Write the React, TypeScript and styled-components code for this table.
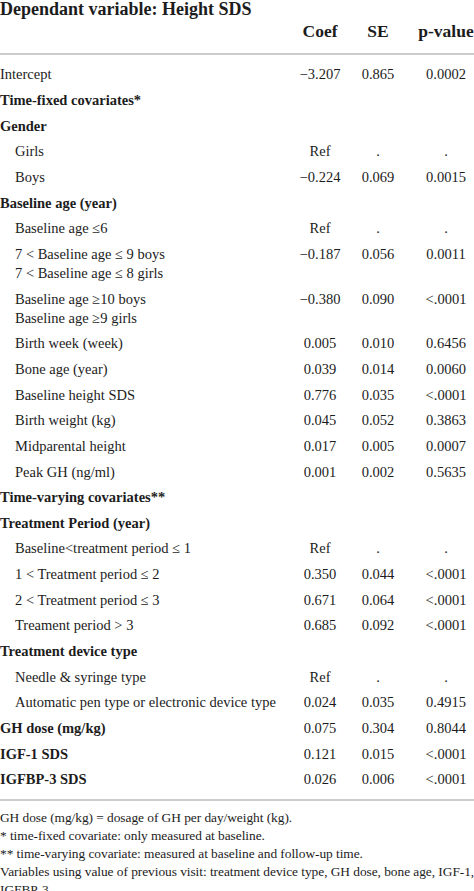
import React from 'react';
import styled, { createGlobalStyle } from 'styled-components';

const GlobalStyle = createGlobalStyle`
	html,
	body {
		margin: 0;
		padding: 0;
		background: #ffffff;
		overflow: hidden;
	}

	body {
		font-family: 'Liberation Serif', 'Times New Roman', serif;
		color: #1c1c1c;
	}
`;

const Page = styled.div`
	width: 474px;
	overflow: hidden;
`;

const Table = styled.div`
	width: 486px;
`;

const Title = styled.h2`
	margin: 0;
	font-size: 18px;
	line-height: 18px;
	font-weight: 700;
	white-space: nowrap;
`;

const Grid = styled.div`
	display: grid;
	grid-template-columns: 1fr 60px 56px 80px;
	align-items: start;
`;

const HeadRow = styled(Grid)`
	padding: 3px 0 12px;
	border-bottom: 2px solid #cccccc;

	span {
		font-size: 17.5px;
		line-height: 20px;
		font-weight: 700;
		text-align: center;
	}
`;

const Body = styled.div`
	padding: 7px 0 6px;
	border-bottom: 2px solid #cccccc;
`;

const Row = styled(Grid)`
	padding: 3.33px 0;
	font-size: 14.5px;
	line-height: 19px;
`;

const Label = styled.div<{ $bold?: boolean; $indent?: boolean }>`
	font-weight: ${(p) => (p.$bold ? 700 : 400)};
	padding-left: ${(p) => (p.$indent ? '15px' : '0')};
	white-space: nowrap;
`;

const Cell = styled.div`
	text-align: center;
	white-space: nowrap;
`;

const Notes = styled.div`
	width: 474px;
	padding-top: 8.5px;
	font-size: 13.4px;
	line-height: 18px;
	letter-spacing: -0.05px;

	p {
		margin: 0;
		white-space: nowrap;
	}
`;

type RowData = {
	label: string[];
	kind: 'section' | 'item' | 'boldItem' | 'plain';
	values?: [string, string, string];
};

const rows: RowData[] = [
	{ label: ['Intercept'], kind: 'plain', values: ['\u22123.207', '0.865', '0.0002'] },
	{ label: ['Time-fixed covariates*'], kind: 'section' },
	{ label: ['Gender'], kind: 'section' },
	{ label: ['Girls'], kind: 'item', values: ['Ref', '.', '.'] },
	{ label: ['Boys'], kind: 'item', values: ['\u22120.224', '0.069', '0.0015'] },
	{ label: ['Baseline age (year)'], kind: 'section' },
	{ label: ['Baseline age \u22646'], kind: 'item', values: ['Ref', '.', '.'] },
	{
		label: ['7 < Baseline age \u2264 9 boys', '7 < Baseline age \u2264 8 girls'],
		kind: 'item',
		values: ['\u22120.187', '0.056', '0.0011'],
	},
	{
		label: ['Baseline age \u226510 boys', 'Baseline age \u22659 girls'],
		kind: 'item',
		values: ['\u22120.380', '0.090', '<.0001'],
	},
	{ label: ['Birth week (week)'], kind: 'item', values: ['0.005', '0.010', '0.6456'] },
	{ label: ['Bone age (year)'], kind: 'item', values: ['0.039', '0.014', '0.0060'] },
	{ label: ['Baseline height SDS'], kind: 'item', values: ['0.776', '0.035', '<.0001'] },
	{ label: ['Birth weight (kg)'], kind: 'item', values: ['0.045', '0.052', '0.3863'] },
	{ label: ['Midparental height'], kind: 'item', values: ['0.017', '0.005', '0.0007'] },
	{ label: ['Peak GH (ng/ml)'], kind: 'item', values: ['0.001', '0.002', '0.5635'] },
	{ label: ['Time-varying covariates**'], kind: 'section' },
	{ label: ['Treatment Period (year)'], kind: 'section' },
	{ label: ['Baseline<treatment period \u2264 1'], kind: 'item', values: ['Ref', '.', '.'] },
	{ label: ['1 < Treatment period \u2264 2'], kind: 'item', values: ['0.350', '0.044', '<.0001'] },
	{ label: ['2 < Treatment period \u2264 3'], kind: 'item', values: ['0.671', '0.064', '<.0001'] },
	{ label: ['Treament period > 3'], kind: 'item', values: ['0.685', '0.092', '<.0001'] },
	{ label: ['Treatment device type'], kind: 'section' },
	{ label: ['Needle & syringe type'], kind: 'item', values: ['Ref', '.', '.'] },
	{
		label: ['Automatic pen type or electronic device type'],
		kind: 'item',
		values: ['0.024', '0.035', '0.4915'],
	},
	{ label: ['GH dose (mg/kg)'], kind: 'boldItem', values: ['0.075', '0.304', '0.8044'] },
	{ label: ['IGF-1 SDS'], kind: 'boldItem', values: ['0.121', '0.015', '<.0001'] },
	{ label: ['IGFBP-3 SDS'], kind: 'boldItem', values: ['0.026', '0.006', '<.0001'] },
];

const notes = [
	'GH dose (mg/kg) = dosage of GH per day/weight (kg).',
	'* time-fixed covariate: only measured at baseline.',
	'** time-varying covariate: measured at baseline and follow-up time.',
	'Variables using value of previous visit: treatment device type, GH dose, bone age, IGF-1,',
	'IGFBP-3.',
];

const App = () => {
	return (
		<Page>
			<GlobalStyle />
			<Table>
				<Title>Dependant variable: Height SDS</Title>
				<HeadRow>
					<span />
					<span>Coef</span>
					<span>SE</span>
					<span>p-value</span>
				</HeadRow>
				<Body>
					{rows.map((row, i) => (
						<Row key={i}>
							<Label $bold={row.kind === 'section' || row.kind === 'boldItem'} $indent={row.kind === 'item'}>
								{row.label.map((line, j) => (
									<div key={j}>{line}</div>
								))}
							</Label>
							<Cell>{row.values ? row.values[0] : ''}</Cell>
							<Cell>{row.values ? row.values[1] : ''}</Cell>
							<Cell>{row.values ? row.values[2] : ''}</Cell>
						</Row>
					))}
				</Body>
			</Table>
			<Notes>
				{notes.map((note, i) => (
					<p key={i}>{note}</p>
				))}
			</Notes>
		</Page>
	);
};

export default App;
